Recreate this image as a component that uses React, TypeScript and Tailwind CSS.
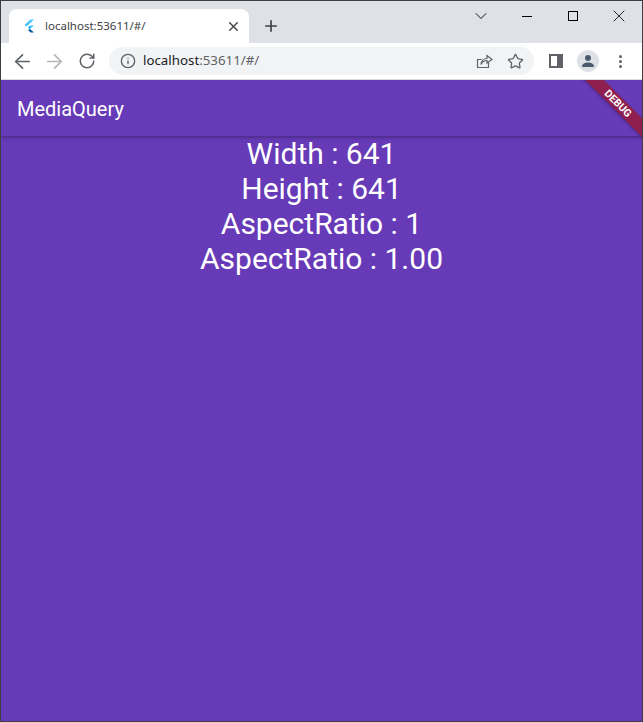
import React from 'react';
import { ArrowLeft, ArrowRight, RotateCw, Info, Star, X, Plus, ChevronDown } from 'lucide-react';

const lines = ['Width : 641', 'Height : 641', 'AspectRatio : 1', 'AspectRatio : 1.00'];

const FlutterLogo = () => (
    <svg width="12" height="14" viewBox="0 0 12 14">
        <path d="M7.5 0.5 L11 0.5 L3.5 7.5 L1.5 6 Z" fill="#47c5fb" />
        <path d="M7.5 6.5 L11 6.5 L7 10 L5 8.5 Z" fill="#47c5fb" />
        <path d="M5 8.5 L7 7 L7 10 Z" fill="#00b5f8" />
        <path d="M5 11 L7 10 L11 13.5 L7.5 13.5 Z" fill="#00569e" />
    </svg>
);

const ShareIcon = () => (
    <svg width="17" height="16" viewBox="0 0 17 16" fill="none" stroke="#5f6368" strokeWidth="1.2">
        <path d="M12.5 9.5 V14.5 H1.5 V6.5 H5.5" />
        <path d="M5 11.5 C5.5 7.5 8 5.5 11 5.5 V2.5 L16 6.5 L11 10 V7.5 C8.5 7.5 6.5 8.5 5 11.5 Z" />
    </svg>
);

const ProfileIcon = () => (
    <div className="flex h-[22px] w-[22px] items-center justify-center rounded-full bg-[#dee1e6]">
        <svg width="14" height="14" viewBox="0 0 14 14" fill="#4d5b70">
            <circle cx="7" cy="4" r="3" />
            <path d="M1 13 C1 9.5 4 8.5 7 8.5 C10 8.5 13 9.5 13 13 Z" />
        </svg>
    </div>
);

const App: React.FC = () => {
    return (
        <div className="flex h-[722px] w-[643px] flex-col overflow-hidden border border-[#3c3f41] bg-[#673ab7] font-['Roboto',sans-serif]">
            {/* Tab strip */}
            <div className="flex h-[42px] shrink-0 bg-[#dee1e6] pl-[8px] pt-[8px]">
                <div className="flex h-[34px] w-[240px] items-center rounded-t-[8px] bg-white pl-[14px] pr-[8px]">
                    <FlutterLogo />
                    <span className="ml-[10px] flex-1 font-['Noto_Sans',sans-serif] text-[11.5px] text-[#3c4043]">localhost:53611/#/</span>
                    <X size={15} strokeWidth={2.4} className="text-[#45494d]" />
                </div>
                <div className="ml-[13px] flex h-[34px] items-center">
                    <Plus size={18} strokeWidth={2.2} className="text-[#3c4043]" />
                </div>
                <div className="ml-auto flex h-[30px] -translate-y-[8px] items-center text-black">
                    <div className="flex w-[46px] justify-center"><ChevronDown size={20} strokeWidth={1.1} /></div>
                    <div className="flex w-[46px] justify-center"><div className="h-px w-[10px] bg-black" /></div>
                    <div className="flex w-[46px] justify-center"><div className="h-[10px] w-[10px] border border-black" /></div>
                    <div className="flex w-[46px] justify-center"><X size={20} strokeWidth={1} /></div>
                </div>
            </div>
            {/* Toolbar */}
            <div className="flex h-[37px] shrink-0 items-center border-b border-[#dadce0] bg-white pl-[10px]">
                <ArrowLeft size={23} strokeWidth={1.8} className="text-[#5f6368]" />
                <ArrowRight size={23} strokeWidth={1.8} className="ml-[9px] text-[#b4b6b8]" />
                <RotateCw size={18} strokeWidth={2} className="ml-[12px] text-[#5f6368]" />
                <div className="ml-[13px] flex h-[28px] w-[425px] items-center rounded-full bg-[#f1f3f4] pl-[11px] pr-[10px]">
                    <Info size={16} strokeWidth={2} className="text-[#5f6368]" />
                    <span className="ml-[7px] flex-1 font-['Noto_Sans',sans-serif] text-[13.3px] text-[#202124]">
                        localhost<span className="text-[#5f6368]">:53611/#/</span>
                    </span>
                    <ShareIcon />
                    <Star size={17} strokeWidth={1.8} className="ml-[14px] text-[#5f6368]" />
                </div>
                <div className="ml-[15px] flex h-[14px] w-[14px] border-[2px] border-r-[6px] border-[#5f6368] bg-white" />
                <div className="ml-[14px]"><ProfileIcon /></div>
                <div className="ml-[20px] flex flex-col gap-[2px]">
                    <span className="h-[3px] w-[3px] rounded-full bg-[#5f6368]" />
                    <span className="h-[3px] w-[3px] rounded-full bg-[#5f6368]" />
                    <span className="h-[3px] w-[3px] rounded-full bg-[#5f6368]" />
                </div>
            </div>
            {/* Flutter page */}
            <div className="relative flex-1 overflow-hidden bg-[#673ab7]">
                <div className="flex h-[56px] items-center bg-[#673ab7] pl-[16px] pt-[2px] shadow-[0_1px_4px_rgba(0,0,0,0.35)]">
                    <span className="text-[20px] font-normal text-white">MediaQuery</span>
                </div>
                <div className="flex flex-col items-center text-[30px] leading-[35px] text-white">
                    {lines.map((line, i) => (
                        <div key={i}>{line}</div>
                    ))}
                </div>
                {/* Debug banner */}
                <div className="absolute right-[-26px] top-[17px] flex h-[13px] w-[100px] rotate-45 items-center justify-center bg-[#8f1f4f] text-[10.5px] font-bold text-white shadow-[0_1px_3px_rgba(0,0,0,0.3)]">
                    DEBUG
                </div>
            </div>
        </div>
    );
};

export default App;
